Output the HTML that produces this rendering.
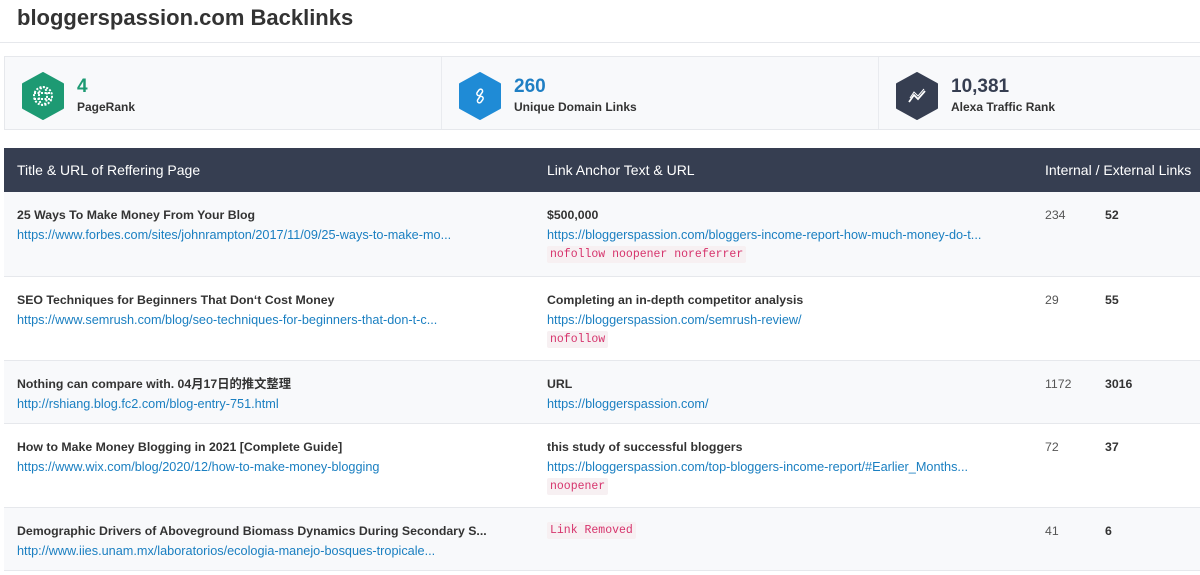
<!DOCTYPE html>
<html><head><meta charset="utf-8"><style>
*{margin:0;padding:0;box-sizing:border-box}
body{width:1200px;height:575px;overflow:hidden;background:#fff;font-family:"Liberation Sans","Noto Sans CJK SC",sans-serif;color:#333}
h1{position:absolute;left:17px;top:5px;font-size:22px;font-weight:bold;color:#333}
.hr{position:absolute;left:0;top:42px;width:1200px;border-top:1px solid #e6e8ec}
.stats{position:absolute;left:4px;top:56px;width:1200px;height:74px;background:#f8f9fb;border:1px solid #e6e8ec;display:flex}
.st{width:437px;flex-shrink:0;height:100%;border-right:1px solid #e9ebef;position:relative}
.st svg{position:absolute;left:16px;top:15px}
.num{position:absolute;left:72px;top:19px;font-size:19px;font-weight:bold}
.lab{position:absolute;left:72px;top:43px;font-size:12px;font-weight:bold;color:#333}
table{position:absolute;left:4px;top:148px;width:1196px;border-collapse:collapse;font-size:12.3px}
th{background:#363e51;color:#fff;font-weight:normal;font-size:14px;text-align:left;height:44px;padding-left:13px}
td{vertical-align:top;padding:13px 0 0 13px}
tr.a td{background:#f8f9fb}
tr.r td{border-bottom:1px solid #e6e8ec}
.t{font-weight:bold;line-height:20px}
.u{color:#1a7fc1;line-height:20px;font-size:12.7px}
.tag{display:inline-block;font-family:"Liberation Mono",monospace;font-size:11.5px;color:#d6336c;background:#f7f0f2;padding:2px 3px;margin-top:1px;border-radius:2px}
.n{color:#555}
.b{font-weight:bold}
</style></head><body>
<h1>bloggerspassion.com Backlinks</h1>
<div class="hr"></div>
<div class="stats">
<div class="st"><svg width="44" height="48" viewBox="0 0 44 48"><polygon points="22,1 42,12 42,36 22,47 2,36 2,12" fill="#1d9a73" stroke="#1d9a73" stroke-width="2" stroke-linejoin="round"/><g stroke="#fff" stroke-width="2" fill="none" stroke-dasharray="2 1.5"><circle cx="22" cy="24" r="9"/><ellipse cx="22" cy="24" rx="4" ry="9"/><line x1="13" y1="21" x2="31" y2="21"/><line x1="13" y1="27" x2="31" y2="27"/></g></svg><div class="num" style="color:#1d9a73">4</div><div class="lab">PageRank</div></div>
<div class="st"><svg width="44" height="48" viewBox="0 0 44 48"><polygon points="22,1 42,12 42,36 22,47 2,36 2,12" fill="#1f8bd6" stroke="#1f8bd6" stroke-width="2" stroke-linejoin="round"/><g stroke="#fff" stroke-width="1.5" fill="none"><rect x="20" y="17" width="4" height="7" rx="2" transform="rotate(35 22 20)"/><rect x="20" y="24" width="4" height="7" rx="2" transform="rotate(35 22 28)"/></g></svg><div class="num" style="color:#1f7fc4">260</div><div class="lab">Unique Domain Links</div></div>
<div class="st" style="border:none"><svg width="44" height="48" viewBox="0 0 44 48"><polygon points="22,1 42,12 42,36 22,47 2,36 2,12" fill="#363e51" stroke="#363e51" stroke-width="2" stroke-linejoin="round"/><polyline points="14,30 19,23 23,27 30,19" stroke="#fff" stroke-width="1.8" fill="none"/><polyline points="15,26 19,20 23,24 29,17" stroke="#fff" stroke-width="1" fill="none"/></svg><div class="num" style="color:#363e51">10,381</div><div class="lab">Alexa Traffic Rank</div></div>
</div>
<table>
<tr><th style="width:530px">Title &amp; URL of Reffering Page</th><th style="width:498px">Link Anchor Text &amp; URL</th><th colspan="2">Internal / External Links</th></tr>
<tr class="a r" style="height:84px"><td><div class="t">25 Ways To Make Money From Your Blog</div><div class="u">https://www.forbes.com/sites/johnrampton/2017/11/09/25-ways-to-make-mo...</div></td><td><div class="t">$500,000</div><div class="u">https://bloggerspassion.com/bloggers-income-report-how-much-money-do-t...</div><span class="tag">nofollow noopener noreferrer</span></td><td class="n" style="width:60px;line-height:20px">234</td><td class="b" style="line-height:20px">52</td></tr>
<tr class="r" style="height:84px"><td><div class="t">SEO Techniques for Beginners That Don‘t Cost Money</div><div class="u">https://www.semrush.com/blog/seo-techniques-for-beginners-that-don-t-c...</div></td><td><div class="t">Completing an in-depth competitor analysis</div><div class="u">https://bloggerspassion.com/semrush-review/</div><span class="tag">nofollow</span></td><td class="n" style="line-height:20px">29</td><td class="b" style="line-height:20px">55</td></tr>
<tr class="a r" style="height:63px"><td><div class="t">Nothing can compare with. 04月17日的推文整理</div><div class="u">http://rshiang.blog.fc2.com/blog-entry-751.html</div></td><td><div class="t">URL</div><div class="u">https://bloggerspassion.com/</div></td><td class="n" style="line-height:20px">1172</td><td class="b" style="line-height:20px">3016</td></tr>
<tr class="r" style="height:84px"><td><div class="t">How to Make Money Blogging in 2021 [Complete Guide]</div><div class="u">https://www.wix.com/blog/2020/12/how-to-make-money-blogging</div></td><td><div class="t">this study of successful bloggers</div><div class="u">https://bloggerspassion.com/top-bloggers-income-report/#Earlier_Months...</div><span class="tag">noopener</span></td><td class="n" style="line-height:20px">72</td><td class="b" style="line-height:20px">37</td></tr>
<tr class="a r" style="height:63px"><td><div class="t">Demographic Drivers of Aboveground Biomass Dynamics During Secondary S...</div><div class="u">http://www.iies.unam.mx/laboratorios/ecologia-manejo-bosques-tropicale...</div></td><td><span class="tag">Link Removed</span></td><td class="n" style="line-height:20px">41</td><td class="b" style="line-height:20px">6</td></tr>
</table>
</body></html>
